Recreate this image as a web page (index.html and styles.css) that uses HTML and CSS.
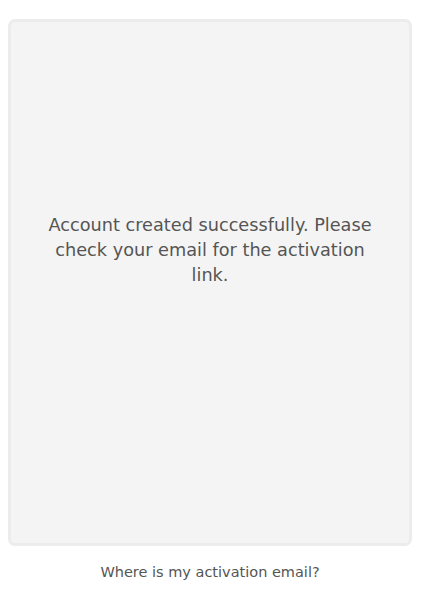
FILE: index.html
```html
<!DOCTYPE html>
<html>
<head>
<meta charset="utf-8">
<link rel="stylesheet" href="styles.css">
</head>
<body>
<div class="page">
  <div class="card">
    <p class="message">Account created successfully. Please check your email for the activation link.</p>
  </div>
  <p class="help"><a href="#" class="help-link">Where is my activation email?</a></p>
</div>
</body>
</html>
```
FILE: styles.css
```css
html, body {
  margin: 0;
  padding: 0;
  background: #ffffff;
}
.page {
  padding: 19px 15px 0 8px;
}
.card {
  box-sizing: border-box;
  height: 527px;
  background: #f4f4f4;
  border: 3px solid #ececec;
  border-radius: 7px;
  display: flex;
  align-items: flex-start;
  justify-content: center;
  padding: 191px 32px 0;
}
.message {
  margin: 0;
  text-align: center;
  font-family: "DejaVu Sans", Verdana, sans-serif;
  font-size: 17.7px;
  line-height: 25px;
  color: #555555;
}
.help {
  margin: 18px 0 0;
  text-align: center;
  font-family: "DejaVu Sans", Tahoma, sans-serif;
  font-size: 14.5px;
}
.help-link {
  color: #555555;
  text-decoration: none;
}
```
